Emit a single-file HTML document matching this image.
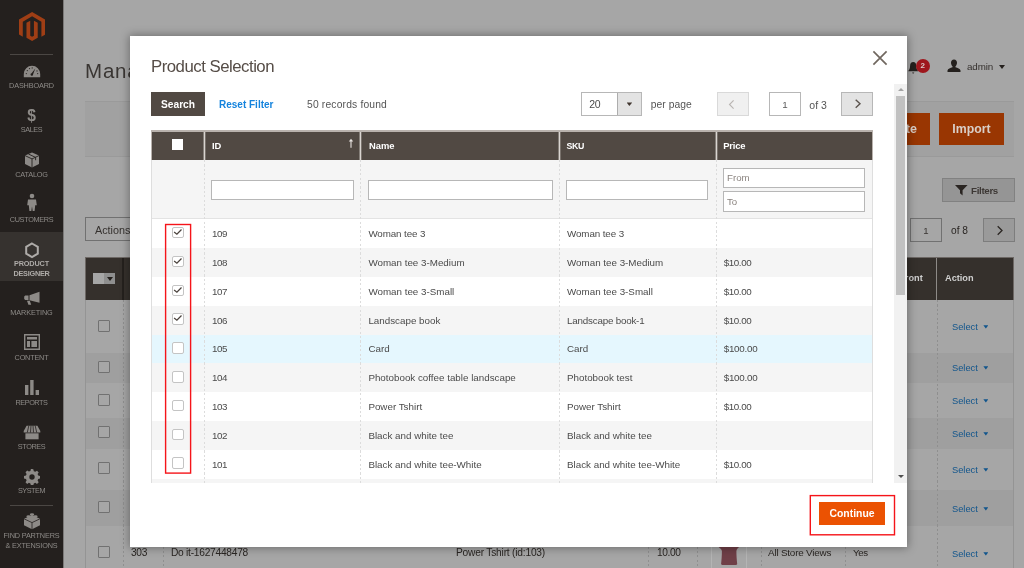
<!DOCTYPE html>
<html lang="en">
<head>
<meta charset="utf-8">
<title>Product Selection</title>
<style>
*{box-sizing:border-box;margin:0;padding:0}
html,body{width:1024px;height:568px;overflow:hidden}
body{position:relative;background:#a6a6a6;font-family:"Liberation Sans",sans-serif;font-size:10px;color:#2a2623}
.abs{position:absolute}
/* ---------- dimmed admin page ---------- */
#side{position:absolute;left:0;top:0;width:63px;height:568px;background:#24201e}
#side .sep{position:absolute;left:10px;width:43px;height:1px;background:#4b4744}
#side .it{position:absolute;left:0;width:63px;text-align:center;color:#8d8a87;font-size:7.3px;line-height:9.6px;white-space:nowrap}
#side .act{position:absolute;left:0;top:232px;width:63px;height:49px;background:#36322f}
#side .it.on{color:#aeaba8;font-weight:bold}
#side svg{position:absolute}
.pg-title{position:absolute;left:85px;top:56.5px;font-size:20.5px;letter-spacing:.8px;line-height:28px;color:#3a3633;white-space:nowrap}
.pg-actions{position:absolute;left:85px;top:101px;width:929px;height:56px;background:#a1a1a1;border-top:1px solid #9a9a9a;border-bottom:1px solid #9a9a9a}
.obtn{position:absolute;top:113px;height:32px;background:#993602;color:#d9cfc8;font-weight:bold;font-size:12px;line-height:32px;text-align:center}
.gbtn{position:absolute;background:#949494;border:1px solid #717171;height:23px}
.ginp{position:absolute;background:#a6a6a6;border:1px solid #717171;height:23px;text-align:center;line-height:21px;font-size:10px;color:#2a2623}
.bgtxt{position:absolute;font-size:10.2px;line-height:12px;color:#2a2623;white-space:nowrap}
.ghead{position:absolute;left:85px;top:257px;width:929px;height:43px;background:#35302c;border-top:1px solid #6d6865;border-right:1px solid #6d6865;border-left:1px solid #6d6865}
.grow{position:absolute;left:85px;width:929px}
.grow.d{background:#9f9f9f}
.gsep{position:absolute;top:300px;width:1px;height:268px;background:repeating-linear-gradient(180deg,#8f8f8f 0,#8f8f8f 2.2px,transparent 2.2px,transparent 4.4px)}
.gcb{position:absolute;left:98px;width:12px;height:12px;border:1px solid #717171;background:#a6a6a6;border-radius:1px}
.sel{position:absolute;left:952px;font-size:9.3px;line-height:12px;color:#11558c;white-space:nowrap}
.sel i{display:inline-block;width:5px;height:3.2px;background:#11558c;clip-path:polygon(0 0,100% 0,50% 100%);margin-left:5.5px;vertical-align:1.5px}
/* ---------- modal ---------- */
#modal{position:absolute;left:129.5px;top:36px;width:777.5px;height:511px;background:#fff;box-shadow:0 0 8.7px 1.5px rgba(0,0,0,.35)}
#modal .title{position:absolute;left:21px;top:19px;font-size:16.6px;line-height:22px;color:#41362f;white-space:nowrap}
.t{position:absolute;white-space:nowrap;font-size:9.8px;line-height:12px;color:#4b4b4b}
#mc{position:absolute;left:0;top:0;width:0;height:0}
.mtitle{position:absolute;left:151px;top:56px;font-size:16.8px;letter-spacing:-.5px;line-height:22px;color:#564d47;white-space:nowrap}
.sbtn{position:absolute;background:#514943;color:#fff;font-weight:bold;font-size:10.200px;line-height:25.400px;text-align:center}
.box{position:absolute;background:#fff;border:1px solid #b7b7b7}
.thead{position:absolute;left:151px;top:130px;width:722px;height:30px;background:#514943;border:2px solid #b9b2ad;border-bottom:0;border-left-width:1.5px;border-right-width:1px}
.t.th{color:#fff;font-weight:bold;font-size:9.400px}
.cb{position:absolute;left:172px;width:11.6px;height:11.6px;background:#fff;border:1px solid #c4c4c4;border-radius:2px}
#mc,#page,#side .it{will-change:transform}
</style>
</head>
<body>
<!-- PAGE -->
<div id="page">
  <div class="pg-title">Manage Product Designs</div>
  <div class="pg-actions"></div>
  <div class="obtn" style="left:795px;width:135px;text-align:right;padding-right:13px;font-size:12.5px">Create Template</div>
  <div class="obtn" style="left:939px;width:65px;font-size:12.3px">Import</div>
  <!-- header right: bell + user -->
  <svg class="abs" style="left:908.3px;top:61.3px" width="10.4" height="14" viewBox="0 0 12 16" preserveAspectRatio="none"><path d="M6 1.2c-2.3 0-3.6 1.9-3.6 4.4 0 2.600-.8 4.300-2 5.400v.8h11.200v-.8c-1.200-1.100-2-2.800-2-5.400C9.600 3.100 8.300 1.200 6 1.200zM4.800 13.200a1.200 1.200 0 0 0 2.400 0z" fill="#24201d"/></svg>
  <div class="abs" style="left:915.8px;top:58.7px;width:14px;height:14px;border-radius:7px;background:#9e171d;color:#d8c9c9;font-size:8px;font-weight:bold;line-height:14px;text-align:center">2</div>
  <svg class="abs" style="left:946px;top:58px" width="16" height="16" viewBox="0 0 16 16"><path d="M8 1.500c1.900 0 3 1.400 3 3.300 0 1.500-.7 2.900-1.500 3.500v1c2 .6 4.700 1.600 5 3.200v1.500H1.500v-1.500c.3-1.600 3-2.600 5-3.200v-1C5.700 7.700 5 6.300 5 4.800c0-1.900 1.100-3.300 3-3.300z" fill="#24201d"/></svg>
  <div class="bgtxt" style="left:967px;top:60.5px;font-size:9.8px;letter-spacing:-.1px;color:#35312e">admin</div>
  <div class="abs" style="left:999px;top:65px;width:0;height:0;border-left:3px solid transparent;border-right:3px solid transparent;border-top:4px solid #24201d"></div>
  <!-- filters button -->
  <div class="gbtn" style="left:942px;top:178px;width:73px;height:24px;background:#959595;border-color:#818181"></div>
  <svg class="abs" style="left:955px;top:185px" width="12.6" height="11" viewBox="0 0 12.6 11"><path d="M0 0h12.600L7.600 5.300v5.200L5 8.300V5.300z" fill="#2a2522"/></svg>
  <div class="bgtxt" style="left:971px;top:184.5px;font-weight:bold;font-size:9.8px;letter-spacing:-.35px;color:#3d3835">Filters</div>
  <!-- actions + pager -->
  <div class="ginp" style="left:85px;top:217px;width:110px;height:24px;background:#a6a6a6"></div>
  <div class="bgtxt" style="left:95px;top:223.6px;font-size:10.8px;color:#35312e">Actions</div>
  <div class="ginp" style="left:910px;top:218px;width:32px;height:24px;line-height:24px;font-size:9.6px;color:#3a3633">1</div>
  <div class="bgtxt" style="left:951px;top:225px">of 8</div>
  <div class="gbtn" style="left:983px;top:218px;width:32px;height:24px;background:#9a9a9a;border-color:#7d7d7d"></div>
  <svg class="abs" style="left:995.5px;top:224.5px" width="8" height="11" viewBox="0 0 8 11"><path d="M1.700 1.300l4.300 4.200-4.300 4.200" fill="none" stroke="#2b2623" stroke-width="1.3"/></svg>
  <!-- grid -->
  <div class="ghead"></div>
  <div class="abs" style="left:93px;top:273px;width:11px;height:11px;background:#a6a6a6"></div>
  <div class="abs" style="left:104px;top:273px;width:11px;height:11px;background:#8f8f8f"></div>
  <div class="abs" style="left:106.5px;top:277px;width:0;height:0;border-left:3px solid transparent;border-right:3px solid transparent;border-top:4px solid #24201d"></div>
  <div class="abs" style="left:122px;top:258px;width:2px;height:42px;background:#24201d"></div>
  <div class="abs" style="left:936px;top:258px;width:1px;height:42px;background:#8d8a87"></div>
  <div class="bgtxt" style="left:878.3px;top:272px;font-weight:bold;color:#cfcfcf;font-size:9.2px">Storefront</div>
  <div class="bgtxt" style="left:945px;top:272px;font-weight:bold;color:#cfcfcf;font-size:9.2px">Action</div>
  <div class="grow d" style="top:353px;height:30px"></div>
  <div class="grow d" style="top:418px;height:31px"></div>
  <div class="grow d" style="top:490px;height:36px"></div>
  <div class="abs" style="left:85px;top:300px;width:1px;height:268px;background:#949494"></div>
  <div class="abs" style="left:1013px;top:300px;width:1px;height:268px;background:#949494"></div>
  <div class="gsep" style="left:123px"></div>
  <div class="gsep" style="left:163px"></div>
  <div class="gsep" style="left:648px"></div>
  <div class="gsep" style="left:697px"></div>
  <div class="gsep" style="left:761px"></div>
  <div class="gsep" style="left:845px"></div>
  <div class="gsep" style="left:937px"></div>
  <div class="gcb" style="top:320px"></div>
  <div class="gcb" style="top:361px"></div>
  <div class="gcb" style="top:394px"></div>
  <div class="gcb" style="top:426px"></div>
  <div class="gcb" style="top:462px"></div>
  <div class="gcb" style="top:501px"></div>
  <div class="gcb" style="top:546px"></div>
  <div class="sel" style="top:321px">Select<i></i></div>
  <div class="sel" style="top:362px">Select<i></i></div>
  <div class="sel" style="top:395px">Select<i></i></div>
  <div class="sel" style="top:428px">Select<i></i></div>
  <div class="sel" style="top:464px">Select<i></i></div>
  <div class="sel" style="top:503px">Select<i></i></div>
  <div class="sel" style="top:548px">Select<i></i></div>
  <div class="bgtxt" style="left:131px;top:546.6px;letter-spacing:-.3px">303</div>
  <div class="bgtxt" style="left:171px;top:546.6px;letter-spacing:-.25px">Do it-1627448478</div>
  <div class="bgtxt" style="left:456px;top:546.6px;letter-spacing:-.2px">Power Tshirt (id:103)</div>
  <div class="bgtxt" style="left:657px;top:546.6px;letter-spacing:-.4px">10.00</div>
  <div class="abs" style="left:711px;top:536px;width:36px;height:32px;border-left:1px solid #b4b4b4;border-right:1px solid #b4b4b4"></div>
  <svg class="abs" style="left:716px;top:540px" width="26" height="28" viewBox="0 0 26 28"><path d="M2.6 7h20.4c-1.3 1.2-2.3 2.4-2.6 4 0 4 .3 9 .8 13-.1.8-1 1-1.8 1H6.900c-.8 0-1.600-.2-1.800-1 .5-4 .8-9 .8-13C5.600 9.400 4 8.200 2.600 7z" fill="#6f3f47"/></svg>
  <div class="bgtxt" style="left:768px;top:546.6px;font-size:9.9px;letter-spacing:-.2px">All Store Views</div>
  <div class="bgtxt" style="left:853px;top:546.6px;font-size:9.7px;letter-spacing:-.3px">Yes</div>
</div>
<!-- SIDEBAR -->
<div id="side">
  <div style="position:absolute;left:63px;top:0;width:1px;height:568px;background:#7b7978"></div>
  <div class="act"></div>
  <!-- logo -->
  <svg style="left:19px;top:12.3px" width="26.2" height="29" viewBox="0 0 27 30" preserveAspectRatio="none"><path d="M13.500 0L0 7.800v15.500l3.900 2.200V10L13.500 4.500 23.100 10v15.500l3.900-2.200V7.800z" fill="#9f3e15"/><path d="M15.400 25.600l-1.900 1.100-1.900-1.100V10.100l-3.900 2.200v15.500l5.800 3.300 5.800-3.300V12.300l-3.900-2.200z" fill="#9f3e15" transform="translate(0,-1.100)"/></svg>
  <div class="sep" style="top:54px"></div>
  <!-- dashboard -->
  <svg style="left:23px;top:65px" width="18" height="13" viewBox="0 0 18 13"><path d="M9 .8A8.200 8.200 0 0 0 .8 9v3.200h16.400V9A8.200 8.200 0 0 0 9 .8z" fill="#8d8a87"/><path d="M12.300 3.600L8.600 8.200a1.300 1.300 0 1 0 1.500 1z" fill="#24201e"/><g fill="#24201e"><circle cx="3.300" cy="8.600" r=".6"/><circle cx="4.300" cy="5.600" r=".6"/><circle cx="6.500" cy="3.600" r=".6"/><circle cx="9.200" cy="2.900" r=".6"/><circle cx="14.700" cy="8.600" r=".6"/><circle cx="14" cy="5.900" r=".6"/></g></svg>
  <div class="it" style="top:81px;letter-spacing:-0.15px">DASHBOARD</div>
  <!-- sales -->
  <div class="it" style="top:105.5px;font-size:15.6px;line-height:20px;font-weight:bold;letter-spacing:0">$</div>
  <div class="it" style="top:125px;letter-spacing:-0.43px">SALES</div>
  <!-- catalog -->
  <svg style="left:24px;top:152px" width="16" height="16" viewBox="0 0 16 16"><path d="M8 .5L1 3.600v8.300l7 3.600 7-3.600V3.600z" fill="#8d8a87"/><path d="M1 3.600l7 3.300 7-3.300M8 6.900v8.600M4.400 2l7.200 3.400v2.800" fill="none" stroke="#24201e" stroke-width=".9"/></svg>
  <div class="it" style="top:170px;letter-spacing:-0.18px">CATALOG</div>
  <!-- customers -->
  <svg style="left:26px;top:193px" width="12" height="19" viewBox="0 0 12 19"><circle cx="6" cy="3" r="2.300" fill="#8d8a87"/><path d="M2 6.500h8l.8 5.800H9.200L8.600 18H6.700L6 13.500 5.300 18H3.400l-.6-5.700H1.200z" fill="#8d8a87"/></svg>
  <div class="it" style="top:215px;letter-spacing:-0.33px">CUSTOMERS</div>
  <!-- product designer -->
  <svg style="left:24px;top:242px" width="16" height="17" viewBox="0 0 16 17"><path d="M8 1.500l5.800 3.400v6.700L8 15 2.200 11.600V4.900z" fill="none" stroke="#aeaba8" stroke-width="2"/></svg>
  <div class="it on" style="top:259px"><span style="letter-spacing:-.17px">PRODUCT</span><br><span style="letter-spacing:-.26px">DESIGNER</span></div>
  <!-- marketing -->
  <svg style="left:23px;top:291px" width="18" height="15" viewBox="0 0 18 15"><path d="M16.500.8v11L6.500 9.300v-5zM5.500 4.500v4.600H2.200L1.200 8V5.600l1-1.100zM4 9.800h2.800l1.400 4H5.400z" fill="#8d8a87"/></svg>
  <div class="it" style="top:308px;letter-spacing:-0.11px">MARKETING</div>
  <!-- content -->
  <svg style="left:24px;top:334px" width="16" height="16" viewBox="0 0 16 16"><path d="M.7.700h14.600v14.600H.7z" fill="none" stroke="#8d8a87" stroke-width="1.400"/><path d="M3 3h10v2.600H3zM3 7h3v6H3zM7.400 7H13v6H7.400z" fill="#8d8a87"/></svg>
  <div class="it" style="top:353px;letter-spacing:-0.2px">CONTENT</div>
  <!-- reports -->
  <svg style="left:24px;top:379px" width="16" height="16" viewBox="0 0 16 16"><path d="M1 6h3.400v10H1zM6.200 1h3.400v15H6.200zM11.600 11H15v5h-3.400z" fill="#8d8a87"/></svg>
  <div class="it" style="top:398px;letter-spacing:-0.46px">REPORTS</div>
  <!-- stores -->
  <svg style="left:23px;top:425px" width="18" height="15" viewBox="0 0 18 15"><path d="M3.600.7h10.800L17.300 6v1.500H.7V6z" fill="#8d8a87"/><path d="M5.800.7L4.300 7.500M8 .7l-.5 6.800M10 .7l.5 6.800M12.200.7l1.500 6.800" stroke="#24201e" stroke-width=".8" fill="none"/><path d="M2.400 8.300h13.200v6H2.400z" fill="#8d8a87"/></svg>
  <div class="it" style="top:442px;letter-spacing:-0.43px">STORES</div>
  <!-- system -->
  <svg style="left:24px;top:468.5px" width="16" height="16" viewBox="0 0 16 16"><path d="M8 0l1.300.2.500 2 1.500.6L13 1.700l1.700 1.700-1.100 1.700.6 1.500 2 .5v2.400l-2 .5-.6 1.500 1.100 1.700-1.700 1.700-1.700-1.100-1.500.6-.5 2H6.900l-.5-2-1.500-.6-1.700 1.100-1.700-1.700 1.100-1.700-.6-1.500-2-.5V6.900l2-.5.6-1.500L1.500 3.200l1.700-1.700 1.700 1.100 1.500-.6.500-2z" fill="#8d8a87"/><circle cx="8" cy="8" r="2.700" fill="#24201e"/></svg>
  <div class="it" style="top:486px;letter-spacing:-0.46px">SYSTEM</div>
  <div class="sep" style="top:505px"></div>
  <!-- partners -->
  <svg style="left:22.5px;top:512px" width="18" height="18" viewBox="0 0 18 18"><path d="M9 3.200L1 6.800v6.400l8 4 8-4V6.800z" fill="#8d8a87"/><ellipse cx="5.600" cy="4.600" rx="2.200" ry="1.300" fill="#8d8a87"/><ellipse cx="12.400" cy="4.600" rx="2.200" ry="1.300" fill="#8d8a87"/><ellipse cx="9" cy="2.600" rx="2.200" ry="1.300" fill="#8d8a87"/><ellipse cx="9" cy="7" rx="2.200" ry="1.300" fill="#8d8a87"/><path d="M1 6.800l8 3.800 8-3.800M9 10.600v6.600" stroke="#24201e" stroke-width=".8" fill="none"/></svg>
  <div class="it" style="top:531px"><span style="letter-spacing:-.17px">FIND PARTNERS</span><br><span style="letter-spacing:-.15px">&amp; EXTENSIONS</span></div>
</div>
<!-- MODAL -->
<div id="modal"></div>
<div id="mc">
  <div class="mtitle">Product Selection</div>
  <svg class="abs" style="left:872px;top:50.4px" width="16" height="16" viewBox="0 0 16 16"><path d="M1.4 1.4l13.2 13.2M14.600 1.400L1.400 14.600" stroke="#70675f" stroke-width="1.7" fill="none"/></svg>
  <div class="sbtn" style="left:151px;top:92.300px;width:54px;height:23.400px">Search</div>
  <div class="t" style="left:219px;top:99px;font-weight:bold;color:#1483dd;font-size:10px">Reset Filter</div>
  <div class="t" style="left:307px;top:99.4px;font-size:10.3px;letter-spacing:.17px;color:#555">50 records found</div>
  <div class="box" style="left:581px;top:92.300px;width:61px;height:23.400px"></div>
  <div class="abs" style="left:617px;top:93.300px;width:24px;height:21.400px;background:#e3e3e3;border-left:1px solid #adadad"></div>
  <div class="abs" style="left:626.6px;top:102.4px;width:5.6px;height:3.5px;background:#41362f;clip-path:polygon(0 0,100% 0,50% 100%)"></div>
  <div class="t" style="left:589.2px;top:98px;font-size:10.5px;letter-spacing:-.3px">20</div>
  <div class="t" style="left:650.7px;top:98.8px;font-size:10.3px;letter-spacing:.05px;color:#555">per page</div>
  <div class="box" style="left:717px;top:92.300px;width:32px;height:23.400px;background:#f0f0f0;border-color:#d9d9d9"></div>
  <svg class="abs" style="left:728px;top:98.5px" width="8" height="12" viewBox="0 0 8 12"><path d="M5.6 1.3L1.5 5.500l4.100 4.200" fill="none" stroke="#b8b4b1" stroke-width="1.1"/></svg>
  <div class="box" style="left:769px;top:92.300px;width:32px;height:23.400px"></div>
  <div class="t" style="left:769px;top:98.6px;width:32px;text-align:center;font-size:9.8px;color:#5a5a5a">1</div>
  <div class="t" style="left:809.3px;top:98.8px;font-size:10.5px;letter-spacing:0;color:#555">of 3</div>
  <div class="box" style="left:841px;top:92.300px;width:32px;height:23.400px;background:#e3e3e3"></div>
  <svg class="abs" style="left:853px;top:98px" width="10" height="12" viewBox="0 0 10 12"><path d="M2.700 1.700l4.300 4-4.300 4" fill="none" stroke="#5b534d" stroke-width="1.4"/></svg>
  <div class="thead"></div>
  <div class="abs" style="left:203px;top:132px;width:3px;height:28px;background:linear-gradient(90deg,#87817b 0,#87817b 33.3%,#d9d4d0 33.3%,#d9d4d0 66.6%,#7a736d 66.6%)"></div>
  <div class="abs" style="left:359px;top:132px;width:3px;height:28px;background:linear-gradient(90deg,#87817b 0,#87817b 33.3%,#d9d4d0 33.3%,#d9d4d0 66.6%,#7a736d 66.6%)"></div>
  <div class="abs" style="left:558px;top:132px;width:3px;height:28px;background:linear-gradient(90deg,#87817b 0,#87817b 33.3%,#d9d4d0 33.3%,#d9d4d0 66.6%,#7a736d 66.6%)"></div>
  <div class="abs" style="left:715px;top:132px;width:3px;height:28px;background:linear-gradient(90deg,#87817b 0,#87817b 33.3%,#d9d4d0 33.3%,#d9d4d0 66.6%,#7a736d 66.6%)"></div>
  <div class="abs" style="left:172px;top:138.500px;width:11px;height:11px;background:#fff"></div>
  <div class="t th" style="left:212px;top:140px;">ID</div>
  <div class="t th" style="left:369px;top:140px;">Name</div>
  <div class="t th" style="left:566.6px;top:140px;font-size:8.800px;letter-spacing:-.35px;top:140.400px">SKU</div>
  <div class="t th" style="left:723.3px;top:140px;letter-spacing:-.2px">Price</div>
  <svg class="abs" style="left:346px;top:136px" width="10" height="14" viewBox="0 0 10 14"><path d="M5 11.7V4.2" stroke="#d2cdc9" stroke-width="1.3" fill="none"/><path d="M2.8 5.4L5 2.8l2.2 2.600z" fill="#e6e2df"/></svg>
  <div class="abs" style="left:152px;top:160px;width:721px;height:59.300px;background:#f5f5f5;border-bottom:1px solid #e3e3e3"></div>
  <div class="box" style="left:211px;top:180px;width:142.5px;height:20px"></div>
  <div class="box" style="left:368px;top:180px;width:184.5px;height:20px"></div>
  <div class="box" style="left:566px;top:180px;width:141.5px;height:20px"></div>
  <div class="box" style="left:723px;top:168px;width:142px;height:20px"></div>
  <div class="box" style="left:723px;top:191px;width:142px;height:20.6px"></div>
  <div class="t" style="left:727px;top:172px;color:#8a837f;font-size:9.7px">From</div>
  <div class="t" style="left:727px;top:195.6px;color:#8a837f;font-size:9.7px">To</div>
  <div class="abs" style="left:152px;top:219.3px;width:721px;height:28.9px;background:#fff"></div>
  <div class="t" style="left:212px;top:228.1px;letter-spacing:-.5px">109</div>
  <div class="t" style="left:368.4px;top:228.1px;letter-spacing:-0.1px">Woman tee 3</div>
  <div class="t" style="left:567px;top:228.1px;letter-spacing:-0.1px">Woman tee 3</div>
  <div class="cb" style="top:226.9px"></div>
  <svg class="abs" style="left:172px;top:226.9px" width="12" height="12" viewBox="0 0 12 12"><path d="M2.1 5L4.900 7.200 9.500 2.500" fill="none" stroke="#4a423d" stroke-width="1.25"/></svg>
  <div class="abs" style="left:152px;top:248.2px;width:721px;height:28.8px;background:#f5f5f5"></div>
  <div class="t" style="left:212px;top:257.0px;letter-spacing:-.5px">108</div>
  <div class="t" style="left:368.4px;top:257.0px">Woman tee 3-Medium</div>
  <div class="t" style="left:567px;top:257.0px">Woman tee 3-Medium</div>
  <div class="t" style="left:723.700px;top:257.0px;letter-spacing:-0.4px">$10.00</div>
  <div class="cb" style="top:255.8px"></div>
  <svg class="abs" style="left:172px;top:255.8px" width="12" height="12" viewBox="0 0 12 12"><path d="M2.1 5L4.900 7.200 9.500 2.500" fill="none" stroke="#4a423d" stroke-width="1.25"/></svg>
  <div class="abs" style="left:152px;top:277.0px;width:721px;height:28.8px;background:#fff"></div>
  <div class="t" style="left:212px;top:285.8px;letter-spacing:-.5px">107</div>
  <div class="t" style="left:368.4px;top:285.8px">Woman tee 3-Small</div>
  <div class="t" style="left:567px;top:285.8px">Woman tee 3-Small</div>
  <div class="t" style="left:723.700px;top:285.8px;letter-spacing:-0.4px">$10.00</div>
  <div class="cb" style="top:284.6px"></div>
  <svg class="abs" style="left:172px;top:284.6px" width="12" height="12" viewBox="0 0 12 12"><path d="M2.1 5L4.900 7.200 9.500 2.500" fill="none" stroke="#4a423d" stroke-width="1.25"/></svg>
  <div class="abs" style="left:152px;top:305.8px;width:721px;height:28.8px;background:#f5f5f5"></div>
  <div class="t" style="left:212px;top:314.6px;letter-spacing:-.5px">106</div>
  <div class="t" style="left:368.4px;top:314.6px">Landscape book</div>
  <div class="t" style="left:567px;top:314.6px;letter-spacing:-0.2px">Landscape book-1</div>
  <div class="t" style="left:723.700px;top:314.6px;letter-spacing:-0.4px">$10.00</div>
  <div class="cb" style="top:313.4px"></div>
  <svg class="abs" style="left:172px;top:313.4px" width="12" height="12" viewBox="0 0 12 12"><path d="M2.1 5L4.900 7.200 9.500 2.500" fill="none" stroke="#4a423d" stroke-width="1.25"/></svg>
  <div class="abs" style="left:152px;top:334.6px;width:721px;height:28.8px;background:#e5f7fe"></div>
  <div class="t" style="left:212px;top:343.4px;letter-spacing:-.5px">105</div>
  <div class="t" style="left:368.4px;top:343.4px">Card</div>
  <div class="t" style="left:567px;top:343.4px">Card</div>
  <div class="t" style="left:723.700px;top:343.4px;letter-spacing:-0.25px">$100.00</div>
  <div class="cb" style="top:342.2px"></div>
  <div class="abs" style="left:152px;top:363.4px;width:721px;height:28.8px;background:#f5f5f5"></div>
  <div class="t" style="left:212px;top:372.2px;letter-spacing:-.5px">104</div>
  <div class="t" style="left:368.4px;top:372.2px">Photobook coffee table landscape</div>
  <div class="t" style="left:567px;top:372.2px">Photobook test</div>
  <div class="t" style="left:723.700px;top:372.2px;letter-spacing:-0.25px">$100.00</div>
  <div class="cb" style="top:371.0px"></div>
  <div class="abs" style="left:152px;top:392.2px;width:721px;height:28.8px;background:#fff"></div>
  <div class="t" style="left:212px;top:401.0px;letter-spacing:-.5px">103</div>
  <div class="t" style="left:368.4px;top:401.0px">Power Tshirt</div>
  <div class="t" style="left:567px;top:401.0px">Power Tshirt</div>
  <div class="t" style="left:723.700px;top:401.0px;letter-spacing:-0.4px">$10.00</div>
  <div class="cb" style="top:399.8px"></div>
  <div class="abs" style="left:152px;top:421.0px;width:721px;height:28.8px;background:#f5f5f5"></div>
  <div class="t" style="left:212px;top:429.8px;letter-spacing:-.5px">102</div>
  <div class="t" style="left:368.4px;top:429.8px">Black and white tee</div>
  <div class="t" style="left:567px;top:429.8px">Black and white tee</div>
  <div class="cb" style="top:428.6px"></div>
  <div class="abs" style="left:152px;top:449.8px;width:721px;height:28.8px;background:#fff"></div>
  <div class="t" style="left:212px;top:458.6px;letter-spacing:-.5px">101</div>
  <div class="t" style="left:368.4px;top:458.6px">Black and white tee-White</div>
  <div class="t" style="left:567px;top:458.6px">Black and white tee-White</div>
  <div class="t" style="left:723.700px;top:458.6px;letter-spacing:-0.4px">$10.00</div>
  <div class="cb" style="top:457.4px"></div>
  <div class="abs" style="left:152px;top:478.600px;width:721px;height:4.400px;background:#f5f5f5"></div>
  <div class="abs" style="left:204px;top:160px;width:1px;height:323px;background:repeating-linear-gradient(180deg,#dcdcdc 0,#dcdcdc 2.2px,transparent 2.2px,transparent 4.4px)"></div>
  <div class="abs" style="left:360px;top:160px;width:1px;height:323px;background:repeating-linear-gradient(180deg,#dcdcdc 0,#dcdcdc 2.2px,transparent 2.2px,transparent 4.4px)"></div>
  <div class="abs" style="left:559px;top:160px;width:1px;height:323px;background:repeating-linear-gradient(180deg,#dcdcdc 0,#dcdcdc 2.2px,transparent 2.2px,transparent 4.4px)"></div>
  <div class="abs" style="left:716px;top:160px;width:1px;height:323px;background:repeating-linear-gradient(180deg,#dcdcdc 0,#dcdcdc 2.2px,transparent 2.2px,transparent 4.4px)"></div>
  <div class="abs" style="left:151px;top:160px;width:1px;height:323px;background:#dedede"></div>
  <div class="abs" style="left:872px;top:160px;width:1px;height:323px;background:#dedede"></div>
  <div class="abs" style="left:894px;top:84px;width:12.5px;height:399px;background:#f1f1f1"></div>
  <div class="abs" style="left:896px;top:96px;width:9px;height:199px;background:#c1c1c1"></div>
  <div class="abs" style="left:898px;top:88px;width:0;height:0;border-left:3px solid transparent;border-right:3px solid transparent;border-bottom:3.500px solid #a3a3a3"></div>
  <div class="abs" style="left:898px;top:475px;width:0;height:0;border-left:3px solid transparent;border-right:3px solid transparent;border-top:3.500px solid #505050"></div>
  <svg class="abs" style="left:160px;top:220px" width="40" height="260" viewBox="0 0 40 260"><rect x="5.600" y="4.500" width="25" height="248.600" fill="none" stroke="#f5141a" stroke-width="1.400"/></svg>
  <div class="abs" style="left:819px;top:501.800px;width:66px;height:23.600px;background:#eb5202;color:#fff;font-weight:bold;font-size:10.400px;line-height:23.600px;text-align:center">Continue</div>
  <svg class="abs" style="left:805px;top:490px" width="100" height="50" viewBox="0 0 100 50"><rect x="5.300" y="5.600" width="84.200" height="39.200" fill="none" stroke="#f5141a" stroke-width="1.400"/></svg>
</div>
</body>
</html>
